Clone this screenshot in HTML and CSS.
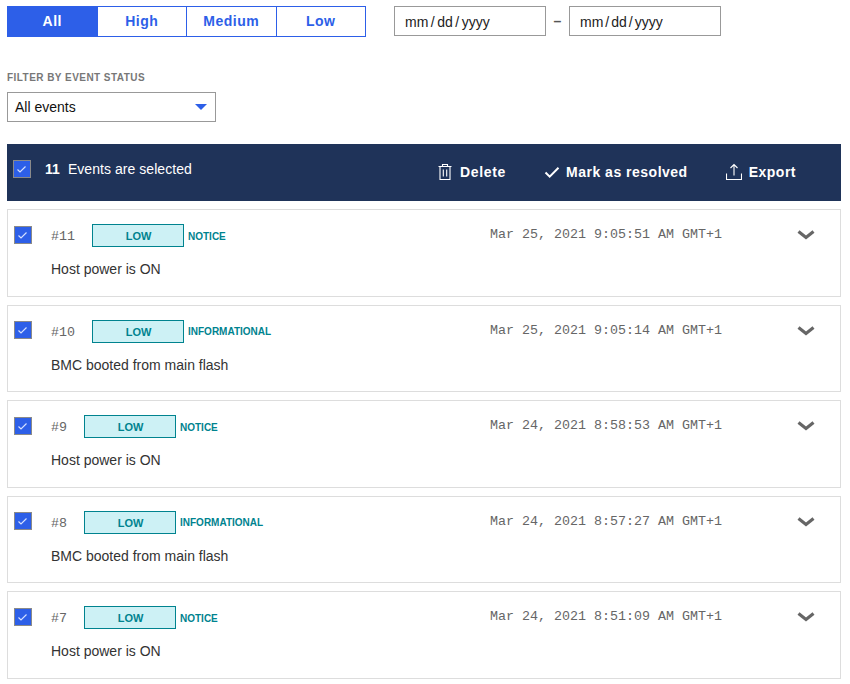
FILE: index.html
```html
<!DOCTYPE html>
<html lang="en">
<head>
<meta charset="utf-8">
<title>Event logs</title>
<link rel="stylesheet" href="styles.css">
</head>
<body>
<div class="top">
  <div class="tabs">
    <button class="tab active">All</button>
    <button class="tab">High</button>
    <button class="tab">Medium</button>
    <button class="tab">Low</button>
  </div>
  <div class="dates">
    <div class="date">mm / dd / yyyy</div>
    <span class="dash">–</span>
    <div class="date tight">mm / dd / yyyy</div>
  </div>
</div>
<div class="filter">
  <div class="filter-label">FILTER BY EVENT STATUS</div>
  <div class="select">All events<span class="caret"></span></div>
</div>
<div class="bulk">
  <span class="check bulk-check"><svg viewBox="0 0 16 16"><path d="M3.5 8.5l2.5 2.5 5.5-5.5" /></svg></span>
  <div class="bulk-text"><b>11</b>Events are selected</div>
  <div class="actions">
    <span class="action del"><svg class="ico" width="14" height="18" viewBox="0 0 14 18"><path d="M0.5 3.5h13M4.5 3.5v-2h5v2M2 3.5v13h10v-13M5.3 6.5v7M8.7 6.5v7"/></svg>Delete</span>
    <span class="action res"><svg class="ico" width="16" height="18" viewBox="0 0 16 18"><path stroke-width="2" d="M1.5 9.5l4.2 4.2 8.8-9"/></svg>Mark as resolved</span>
    <span class="action exp"><svg class="ico" width="16" height="18" viewBox="0 0 16 18"><path d="M8 12.5v-11M4.5 5L8 1.5 11.5 5M0.5 10.5v6h15v-6"/></svg>Export</span>
  </div>
</div>
<div class="list">
  <div class="card">
    <span class="check"><svg viewBox="0 0 16 16"><path d="M3.5 8.5l2.5 2.5 5.5-5.5" /></svg></span>
    <div class="row"><span class="id">#11</span><span class="badge">LOW</span><span class="status">NOTICE</span></div>
    <span class="time">Mar 25, 2021 9:05:51 AM GMT+1</span>
    <svg class="chev" width="18" height="10" viewBox="0 0 18 10"><path d="M1.5 1.5L9 7.5l7.5-6"/></svg>
    <div class="msg">Host power is ON</div>
  </div>
  <div class="card">
    <span class="check"><svg viewBox="0 0 16 16"><path d="M3.5 8.5l2.5 2.5 5.5-5.5" /></svg></span>
    <div class="row"><span class="id">#10</span><span class="badge">LOW</span><span class="status">INFORMATIONAL</span></div>
    <span class="time">Mar 25, 2021 9:05:14 AM GMT+1</span>
    <svg class="chev" width="18" height="10" viewBox="0 0 18 10"><path d="M1.5 1.5L9 7.5l7.5-6"/></svg>
    <div class="msg">BMC booted from main flash</div>
  </div>
  <div class="card">
    <span class="check"><svg viewBox="0 0 16 16"><path d="M3.5 8.5l2.5 2.5 5.5-5.5" /></svg></span>
    <div class="row"><span class="id">#9</span><span class="badge">LOW</span><span class="status">NOTICE</span></div>
    <span class="time">Mar 24, 2021 8:58:53 AM GMT+1</span>
    <svg class="chev" width="18" height="10" viewBox="0 0 18 10"><path d="M1.5 1.5L9 7.5l7.5-6"/></svg>
    <div class="msg">Host power is ON</div>
  </div>
  <div class="card">
    <span class="check"><svg viewBox="0 0 16 16"><path d="M3.5 8.5l2.5 2.5 5.5-5.5" /></svg></span>
    <div class="row"><span class="id">#8</span><span class="badge">LOW</span><span class="status">INFORMATIONAL</span></div>
    <span class="time">Mar 24, 2021 8:57:27 AM GMT+1</span>
    <svg class="chev" width="18" height="10" viewBox="0 0 18 10"><path d="M1.5 1.5L9 7.5l7.5-6"/></svg>
    <div class="msg">BMC booted from main flash</div>
  </div>
  <div class="card">
    <span class="check"><svg viewBox="0 0 16 16"><path d="M3.5 8.5l2.5 2.5 5.5-5.5" /></svg></span>
    <div class="row"><span class="id">#7</span><span class="badge">LOW</span><span class="status">NOTICE</span></div>
    <span class="time">Mar 24, 2021 8:51:09 AM GMT+1</span>
    <svg class="chev" width="18" height="10" viewBox="0 0 18 10"><path d="M1.5 1.5L9 7.5l7.5-6"/></svg>
    <div class="msg">Host power is ON</div>
  </div>
</div>
</body>
</html>
```
FILE: styles.css
```css
* { box-sizing: border-box; }
html, body { height: 684px; overflow: hidden; }
body {
  margin: 0;
  padding: 6px 9px 0 7px;
  background: #fff;
  font-family: "Liberation Sans", Arial, sans-serif;
  color: #333;
}
.top { display: flex; align-items: flex-start; gap: 28px; }
.tabs { display: flex; width: 359px; height: 31px; }
.tab {
  flex: 1 1 0;
  margin: 0 0 0 -1px;
  padding: 0 0 2px;
  background: #fff;
  border: 1px solid #2d5fe8;
  color: #2d5fe8;
  font: bold 14px "Liberation Sans", Arial, sans-serif;
  letter-spacing: 0.5px;
}
.tab:first-child { margin-left: 0; }
.tab.active { background: #2d5fe8; color: #fff; }
.dates { display: flex; align-items: center; }
.date {
  width: 152px;
  height: 30px;
  padding-left: 10px;
  border: 1px solid #999;
  font-size: 14px;
  line-height: 30px;
  word-spacing: -1.4px;
  color: #222;
}
.date.tight { word-spacing: -1.9px; }
.dash { width: 23px; text-align: center; font-size: 14px; color: #555; font-weight: bold; }
.filter { margin-top: 35px; }
.filter-label {
  font-size: 10px;
  line-height: 12px;
  font-weight: bold;
  letter-spacing: 0.45px;
  color: #777;
}
.select {
  position: relative;
  width: 209px;
  height: 30px;
  margin-top: 8px;
  padding-left: 7px;
  border: 1px solid #999;
  font-size: 14px;
  line-height: 28px;
  color: #111;
}
.caret {
  position: absolute;
  right: 8px;
  top: 11px;
  border-left: 6px solid transparent;
  border-right: 6px solid transparent;
  border-top: 6px solid #2d5fe8;
}
.bulk {
  display: flex;
  align-items: flex-start;
  height: 57px;
  margin-top: 22px;
  padding: 16px 0 0 6px;
  background: #1f3359;
  color: #fff;
}
.check {
  display: block;
  width: 18px;
  height: 18px;
  background: #2d5fe8;
  border: 1px solid #8a8a8a;
}
.check svg { display: block; width: 16px; height: 16px; fill: none; stroke: #d5e0ff; stroke-width: 1.2; }
.bulk-text { margin-left: 14px; font-size: 14px; line-height: 18px; letter-spacing: 0.05px; }
.bulk-text b { margin-right: 8px; }
.actions { display: flex; margin-left: auto; padding-top: 2px; font-weight: bold; font-size: 14px; letter-spacing: 0.5px; }
.action { display: flex; align-items: center; height: 20px; }
.ico { fill: none; stroke: #fff; stroke-width: 1.1; margin-right: 8px; }
.del { margin-right: 38px; letter-spacing: 0.65px; }
.res .ico { margin-right: 6px; }
.res { margin-right: 38px; }
.exp .ico { margin-right: 7px; }
.exp { margin-right: 45px; }
.list { display: flex; flex-direction: column; gap: 8px; margin-top: 8px; }
.card {
  display: grid;
  grid-template-columns: 18px 1fr 232px 93px;
  grid-template-rows: 23px auto;
  height: 87.5px;
  padding: 14px 25px 0 6px;
  border: 1px solid #ddd;
  background: #fff;
}
.card .check { margin-top: 1.9px; }
.row { display: flex; align-items: center; margin-left: 19px; }
.id { margin-right: 17px; padding-top: 2.8px; font: 13.33px "Liberation Mono", "Courier New", monospace; color: #666; }
.badge {
  flex: none;
  width: 92px;
  height: 23px;
  padding-left: 1px;
  background: #cdf1f5;
  border: 1px solid #00838f;
  text-align: center;
  font-size: 11px;
  font-weight: bold;
  line-height: 22.4px;
  color: #00838f;
}
.status { margin-left: 4px; padding-top: 1.8px; font-size: 10px; font-weight: bold; color: #00838f; }
.time {
  line-height: 21px;
  font-family: "Liberation Mono", "Courier New", monospace;
  font-size: 13.33px;
  color: #666;
  white-space: nowrap;
}
.chev { margin: 6px 0 0 75px; fill: none; stroke: #666; stroke-width: 3.2; overflow: visible; }
.msg { grid-column: 2 / 5; margin: 14px 0 0 19px; font-size: 14px; line-height: 16px; color: #333; }
```
